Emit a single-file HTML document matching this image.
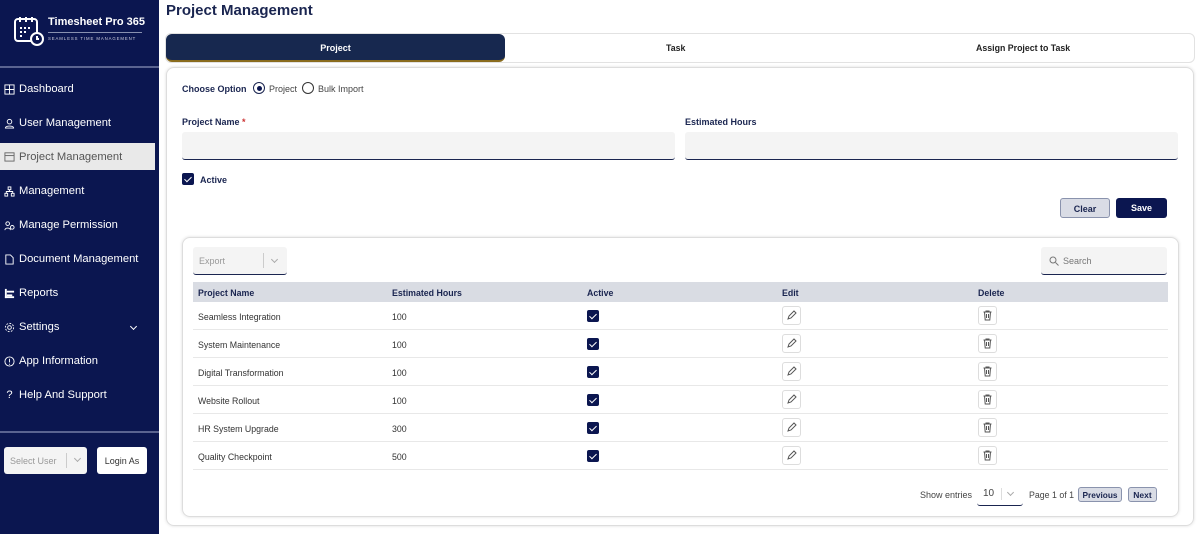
<!DOCTYPE html>
<html><head><meta charset="utf-8"><style>
*{box-sizing:border-box;margin:0;padding:0}
body{width:1200px;height:534px;overflow:hidden;font-family:"Liberation Sans",sans-serif;background:#fff;position:relative;color:#222}
.sb{position:absolute;left:0;top:0;width:159px;height:534px;background:#0b1650;color:#fff}
.abs{position:absolute}
.mi{position:absolute;left:4px;font-size:11.2px;color:#fff;display:flex;align-items:center;gap:4px;height:20px}
.mi svg{width:11px;height:11px}
.act{left:0;width:155px;height:27px;background:#e9e9e9;color:#555;padding-left:4px}
.lbl{font-size:9.3px;font-weight:bold;color:#1a2550}
.inp{position:absolute;height:28px;background:#f4f4f4;border-bottom:1.5px solid #1a2550;border-radius:3px}
.th{position:absolute;top:283px;font-size:8.8px;font-weight:bold;color:#1a2550}
.td{position:absolute;font-size:8.8px;color:#333}
.cb{position:absolute;width:12px;height:12px;background:#0b1650;border-radius:2px}
.cb:after{content:"";position:absolute;left:4px;top:1.5px;width:3px;height:6px;border:solid #fff;border-width:0 1.3px 1.3px 0;transform:rotate(45deg)}
.ib{position:absolute;width:19px;height:19px;border:1px solid #ddd;border-radius:3px;background:#fff}
.rl{position:absolute;left:193px;width:975px;height:1px;background:#e8e8e8}
.chev{position:absolute;width:5px;height:5px;border:solid #aaa;border-width:0 1px 1px 0;transform:rotate(45deg)}
</style></head><body>
<div class="sb">
 <svg class="abs" style="left:13px;top:15px" width="32" height="32" viewBox="0 0 32 32" fill="none" stroke="#fff" stroke-width="2"><rect x="2" y="4" width="22" height="22" rx="3"/><path d="M7 2v5M13 2v5M19 2v5"/><circle cx="24" cy="24" r="6" fill="#0b1650"/><path d="M24 21v3h2"/><g fill="#fff" stroke="none"><rect x="7" y="12" width="2" height="2"/><rect x="11" y="12" width="2" height="2"/><rect x="15" y="12" width="2" height="2"/><rect x="7" y="16" width="2" height="2"/><rect x="11" y="16" width="2" height="2"/><rect x="7" y="20" width="2" height="2"/></g></svg>
 <div class="abs" style="left:48px;top:16px;font-size:11px;font-weight:bold">Timesheet Pro 365</div>
 <div class="abs" style="left:48px;top:32px;width:94px;height:1px;background:#8890b0"></div>
 <div class="abs" style="left:48px;top:36px;font-size:4.3px;letter-spacing:0.9px;color:#ccd">SEAMLESS TIME MANAGEMENT</div>
 <div class="abs" style="left:0;top:66px;width:159px;height:2px;background:#5a6390"></div>
 <div class="mi" style="top:79px"><svg viewBox="0 0 12 12" fill="none" stroke="#fff"><rect x="1" y="1" width="10" height="10"/><path d="M1 6h10M6 1v10"/></svg>Dashboard</div>
 <div class="mi" style="top:113px"><svg viewBox="0 0 12 12" fill="none" stroke="#fff"><circle cx="6" cy="4" r="2.5"/><path d="M1.5 11c0-3 9-3 9 0z"/></svg>User Management</div>
 <div class="mi act" style="top:143px;height:27px"><svg viewBox="0 0 12 12" fill="none" stroke="#666"><rect x="1" y="2" width="10" height="9"/><path d="M1 5h10"/></svg>Project Management</div>
 <div class="mi" style="top:181px"><svg viewBox="0 0 12 12" fill="none" stroke="#fff"><rect x="4.5" y="1" width="3" height="3"/><rect x="1" y="8" width="3" height="3"/><rect x="8" y="8" width="3" height="3"/><path d="M6 4v2M2.5 8V6h7v2"/></svg>Management</div>
 <div class="mi" style="top:215px"><svg viewBox="0 0 12 12" fill="none" stroke="#fff"><circle cx="4" cy="4" r="2"/><path d="M1 11c0-3 6-3 6 0"/><circle cx="9" cy="8" r="2"/></svg>Manage Permission</div>
 <div class="mi" style="top:249px"><svg viewBox="0 0 12 12" fill="none" stroke="#fff"><path d="M2 1h5l3 3v7H2z"/></svg>Document Management</div>
 <div class="mi" style="top:283px"><svg viewBox="0 0 12 12" fill="#fff"><rect x="1" y="1" width="2" height="10"/><rect x="3" y="3" width="8" height="2"/><rect x="3" y="7" width="6" height="2"/><rect x="1" y="9" width="10" height="2"/></svg>Reports</div>
 <div class="mi" style="top:317px"><svg viewBox="0 0 12 12" fill="none" stroke="#fff"><circle cx="6" cy="6" r="2"/><circle cx="6" cy="6" r="4.5" stroke-dasharray="2 1.5"/></svg>Settings</div>
 <div class="chev" style="left:131px;top:324px;border-color:#fff"></div>
 <div class="mi" style="top:351px"><svg viewBox="0 0 12 12" fill="none" stroke="#fff"><circle cx="6" cy="6" r="5"/><path d="M6 3v4M6 8.5v1"/></svg>App Information</div>
 <div class="mi" style="top:385px"><span style="width:11px;text-align:center">?</span>Help And Support</div>
 <div class="abs" style="left:0;top:431px;width:159px;height:2px;background:#5a6390"></div>
 <div class="abs" style="left:4px;top:447px;width:83px;height:27px;background:#f4f4f4;border-radius:3px;font-size:9px;color:#999;padding:9px 0 0 6px">Select User<span style="position:absolute;left:62px;top:6px;width:1px;height:15px;background:#ccc"></span><span class="chev" style="left:71px;top:9px"></span></div>
 <div class="abs" style="left:97px;top:447px;width:50px;height:27px;background:#fff;border-radius:3px;font-size:9px;color:#333;text-align:center;padding-top:9px">Login As</div>
</div>

<div class="abs" style="left:166px;top:2px;font-size:15px;font-weight:bold;color:#1a2550">Project Management</div>
<div class="abs" style="left:165px;top:33px;width:1030px;height:30px;border:1px solid #e2e2e2;border-radius:6px"></div>
<div class="abs" style="left:166px;top:34px;width:339px;height:28px;background:#17284f;border-radius:6px;border-bottom:2px solid #8a6c1e;color:#fff;font-size:9px;font-weight:bold;text-align:center;padding-top:9px">Project</div>
<div class="abs lbl" style="left:666px;top:43px;font-size:8.8px;color:#222">Task</div>
<div class="abs lbl" style="left:976px;top:43px;font-size:8.8px;color:#222">Assign Project to Task</div>

<div class="abs" style="left:166px;top:67px;width:1028px;height:459px;border:1px solid #ddd;border-radius:8px;box-shadow:0 0 3px #ddd"></div>
<div class="abs lbl" style="left:182px;top:84px;font-size:9px">Choose Option</div>
<div class="abs" style="left:253px;top:82px;width:12px;height:12px;border:1.3px solid #1a2550;border-radius:50%"><div style="margin:2.5px;width:5px;height:5px;background:#0b1650;border-radius:50%"></div></div>
<div class="abs" style="left:269px;top:84px;font-size:9px;color:#444">Project</div>
<div class="abs" style="left:302px;top:82px;width:12px;height:12px;border:1.3px solid #333;border-radius:50%"></div>
<div class="abs" style="left:318px;top:84px;font-size:9px;color:#444">Bulk Import</div>
<div class="abs lbl" style="left:182px;top:117px;font-size:9px">Project Name <span style="color:#c33">*</span></div>
<div class="abs lbl" style="left:685px;top:117px;font-size:9px">Estimated Hours</div>
<div class="inp" style="left:182px;top:132px;width:493px"></div>
<div class="inp" style="left:685px;top:132px;width:493px"></div>
<div class="cb" style="left:182px;top:173px"></div>
<div class="abs lbl" style="left:200px;top:175px;font-size:9px">Active</div>
<div class="abs" style="left:1060px;top:198px;width:50px;height:20px;background:#d9dce5;border:1px solid #8a93ad;border-radius:3px;font-size:9px;text-align:center;padding-top:5px;color:#1a2550;font-weight:bold">Clear</div>
<div class="abs" style="left:1116px;top:198px;width:51px;height:20px;background:#0b1650;border-radius:3px;font-size:9px;text-align:center;padding-top:5px;color:#fff;font-weight:bold">Save</div>

<div class="abs" style="left:182px;top:237px;width:997px;height:280px;border:1px solid #ddd;border-radius:8px;box-shadow:0 0 3px #ddd"></div>
<div class="abs" style="left:193px;top:247px;width:94px;height:28px;background:#f4f4f4;border-bottom:1.5px solid #1a2550;border-radius:3px;font-size:9px;color:#999;padding:9px 0 0 6px">Export<span style="position:absolute;left:70px;top:6px;width:1px;height:15px;background:#ccc"></span><span class="chev" style="left:79px;top:10px"></span></div>
<div class="abs" style="left:1041px;top:247px;width:126px;height:28px;background:#f4f4f4;border-bottom:1.5px solid #1a2550;border-radius:3px;font-size:9px;color:#777;padding:9px 0 0 22px">Search<svg style="position:absolute;left:8px;top:9px" width="10" height="10" viewBox="0 0 10 10" fill="none" stroke="#777"><circle cx="4" cy="4" r="3"/><path d="M6.5 6.5l3 3"/></svg></div>
<div class="abs" style="left:193px;top:282px;width:975px;height:20px;background:#d9dce3"></div>
<div class="th" style="left:198px;top:288px">Project Name</div>
<div class="th" style="left:392px;top:288px">Estimated Hours</div>
<div class="th" style="left:587px;top:288px">Active</div>
<div class="th" style="left:782px;top:288px">Edit</div>
<div class="th" style="left:978px;top:288px">Delete</div>
<div id="rows"></div>
<script>
var d=[["Seamless Integration",100],["System Maintenance",100],["Digital Transformation",100],["Website Rollout",100],["HR System Upgrade",300],["Quality Checkpoint",500]],h="";
d.forEach(function(r,i){var c=316+i*28;
h+='<div class="td" style="left:198px;top:'+(c-4)+'px">'+r[0]+'</div><div class="td" style="left:392px;top:'+(c-4)+'px">'+r[1]+'</div><div class="cb" style="left:587px;top:'+(c-6)+'px"></div>'+
'<div class="ib" style="left:782px;top:'+(c-10)+'px"><svg width="17" height="17" viewBox="0 0 17 17" fill="none" stroke="#555" stroke-width="1"><path d="M5 12l1-3 5-5 2 2-5 5z"/></svg></div>'+
'<div class="ib" style="left:978px;top:'+(c-10)+'px"><svg width="17" height="17" viewBox="0 0 17 17" fill="none" stroke="#555" stroke-width="1"><path d="M4.5 5h8M7 5V4h3v1M5.5 5l.7 8h4.6l.7-8M7.5 7v4M9.5 7v4"/></svg></div>'+
'<div class="rl" style="top:'+(c+13)+'px"></div>';});
document.getElementById('rows').innerHTML=h;
</script>
<div class="abs" style="left:920px;top:490px;font-size:9px;color:#444">Show entries</div>
<div class="abs" style="left:977px;top:483px;width:46px;height:23px;border-bottom:1.5px solid #1a2550;border-radius:3px;font-size:10px;color:#444;padding:5px 0 0 6px">10<span style="position:absolute;left:24px;top:5px;width:1px;height:12px;background:#ddd"></span><span class="chev" style="left:31px;top:7px"></span></div>
<div class="abs" style="left:1029px;top:490px;font-size:8.8px;color:#444">Page 1 of 1</div>
<div class="abs" style="left:1078px;top:487px;width:44px;height:15px;background:#d9dce5;border:1px solid #8a93ad;border-radius:3px;font-size:8.3px;font-weight:bold;color:#1a2550;text-align:center;padding-top:2px">Previous</div>
<div class="abs" style="left:1128px;top:487px;width:29px;height:15px;background:#d9dce5;border:1px solid #8a93ad;border-radius:3px;font-size:8.5px;font-weight:bold;color:#1a2550;text-align:center;padding-top:2px">Next</div>
</body></html>
